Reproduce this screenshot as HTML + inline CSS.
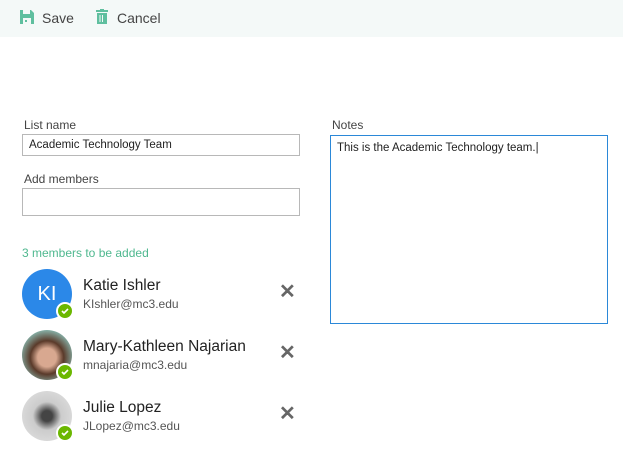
<!DOCTYPE html>
<html><head><meta charset="utf-8"><style>
body{margin:0;width:623px;height:461px;background:#fff;font-family:"Liberation Sans",sans-serif;position:relative;overflow:hidden;color:#333}
.bar{position:absolute;left:0;top:0;width:623px;height:37px;background:#f4f9f8}
.bar span{position:absolute;top:10px;font-size:14px;color:#444}
.lbl{position:absolute;font-size:12px;color:#444}
.inp{position:absolute;border:1px solid #b8b8b8;box-sizing:border-box;font-size:11.5px;color:#222;padding:4px 6px}
.av{position:absolute;left:22px;width:50px;height:50px;border-radius:50%}
.ck{position:absolute;width:14px;height:14px;border-radius:50%;background:#6bb700;border:2px solid #fff;left:56px}
.ck svg{position:absolute;left:3px;top:4px}
.nm{position:absolute;left:83px;font-size:15.5px;color:#222}
.em{position:absolute;left:83px;font-size:12px;color:#555}
.x{position:absolute;left:279px;font-size:20px;font-weight:bold;color:#666}
</style></head><body>
<div class="bar">
<svg style="position:absolute;left:20px;top:10px" width="14" height="14" viewBox="0 0 14 14"><path d="M0 0h11l3 3v11H0z" fill="#5fbf9f"/><rect x="3" y="0" width="7" height="4" fill="#f4f9f8"/><rect x="3" y="8" width="8" height="6" fill="#f4f9f8"/><rect x="5" y="10" width="2" height="2" fill="#5fbf9f"/></svg>
<span style="left:42px">Save</span>
<svg style="position:absolute;left:96px;top:9px" width="12" height="15" viewBox="0 0 12 15"><rect x="0" y="1" width="12" height="2" fill="#5fbf9f"/><rect x="4" y="0" width="4" height="2" fill="#5fbf9f"/><path d="M1 4h10v11H1z" fill="#5fbf9f"/><rect x="3.5" y="6" width="1" height="7" fill="#f4f9f8"/><rect x="6" y="6" width="1" height="7" fill="#f4f9f8"/></svg>
<span style="left:117px">Cancel</span>
</div>
<div class="lbl" style="left:24px;top:118px">List name</div>
<div class="inp" style="left:22px;top:134px;width:278px;height:22px;padding-top:4px">Academic Technology Team</div>
<div class="lbl" style="left:24px;top:172px">Add members</div>
<div class="inp" style="left:22px;top:188px;width:278px;height:28px"></div>
<div class="lbl" style="left:332px;top:118px">Notes</div>
<div class="inp" style="left:330px;top:135px;width:278px;height:189px;border-color:#2b88d8;padding:6px 6px">This is the Academic Technology team.|</div>
<div class="lbl" style="left:22px;top:246px;color:#4fb88f">3 members to be added</div>

<div class="av" style="top:269px;background:#2b88e8;color:#fff;font-size:20px;text-align:center;line-height:50px">KI</div>
<div class="ck" style="top:302px"><svg width="8" height="6" viewBox="0 0 8 6"><path d="M1 3l2 2 4-4" stroke="#fff" stroke-width="1.6" fill="none"/></svg></div>
<div class="nm" style="top:277px">Katie Ishler</div>
<div class="em" style="top:297px">KIshler@mc3.edu</div>
<div class="x" style="top:279px">✕</div>

<div class="av" style="top:330px;background:radial-gradient(circle at 50% 55%,#d8a890 0 25%,#5a3a2a 45%,#8fc8c0 80%)"></div>
<div class="ck" style="top:363px"><svg width="8" height="6" viewBox="0 0 8 6"><path d="M1 3l2 2 4-4" stroke="#fff" stroke-width="1.6" fill="none"/></svg></div>
<div class="nm" style="top:338px">Mary-Kathleen Najarian</div>
<div class="em" style="top:358px">mnajaria@mc3.edu</div>
<div class="x" style="top:340px">✕</div>

<div class="av" style="top:391px;background:radial-gradient(circle at 50% 50%,#444 0 15%,#ccc 40%,#e4e4e4)"></div>
<div class="ck" style="top:424px"><svg width="8" height="6" viewBox="0 0 8 6"><path d="M1 3l2 2 4-4" stroke="#fff" stroke-width="1.6" fill="none"/></svg></div>
<div class="nm" style="top:399px">Julie Lopez</div>
<div class="em" style="top:419px">JLopez@mc3.edu</div>
<div class="x" style="top:401px">✕</div>
</body></html>
